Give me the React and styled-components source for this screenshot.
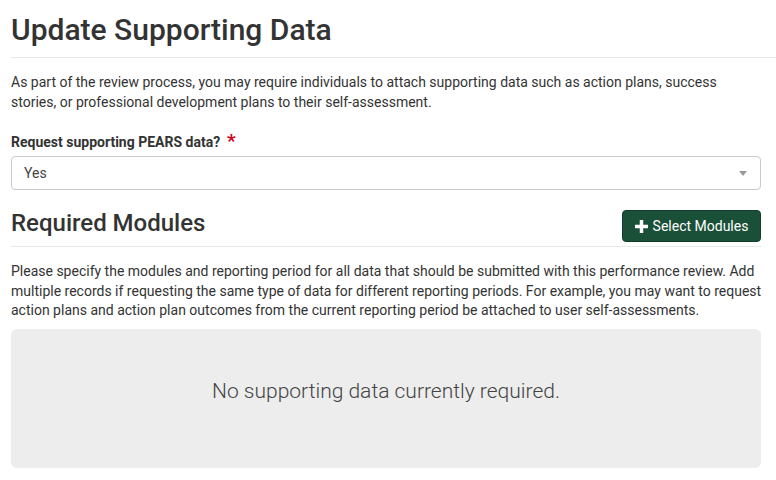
import React from "react";
import styled, { createGlobalStyle } from "styled-components";

const Global = createGlobalStyle`
  html, body { margin: 0; padding: 0; background: #fff; }
  body {
    font-family: Roboto, "Liberation Sans", Arial, sans-serif;
    color: #333;
    font-size: 14px;
  }
  * { box-sizing: border-box; }
`;

const Page = styled.div`
  width: 776px;
  padding: 0 15px 24px 11px;
`;

const TitleBar = styled.div`
  margin: 12px -15px 0 0;
  padding-bottom: 10px;
  border-bottom: 1px solid #e6e6e6;
`;

const Title = styled.h1`
  margin: 0;
  font-size: 30px;
  line-height: 35px;
  font-weight: 500;
  color: #333;
`;

const Text = styled.p`
  margin: ${(p) => p.$mt || 0}px ${(p) => p.$mr || 0}px 0 0;
  font-size: 14px;
  line-height: ${(p) => p.$lh || 20}px;
  color: #333;
`;

const Label = styled.label`
  display: block;
  margin-top: 20px;
  font-size: 14px;
  line-height: 20px;
  font-weight: 700;
  color: #333;
`;

const Star = styled.span`
  color: #d0021b;
  font-size: 19px;
  margin-left: 7px;
  line-height: 0;
`;

const Select = styled.div`
  margin-top: 4px;
  height: 34px;
  border: 1px solid #cbcbcb;
  border-radius: 4px;
  display: flex;
  align-items: center;
  justify-content: space-between;
  padding: 0 12px 0 12px;
  color: #444;
  font-size: 14px;
`;

const Caret = styled.span`
  width: 0;
  height: 0;
  border-left: 4px solid transparent;
  border-right: 4px solid transparent;
  border-top: 5px solid #999;
  margin-right: 1px;
`;

const SectionHead = styled.div`
  margin-top: 20px;
  display: flex;
  align-items: flex-end;
  justify-content: space-between;
  padding-bottom: 4px;
  border-bottom: 1px solid #e9e9e9;
`;

const SectionTitle = styled.h2`
  margin: 0 0 6px;
  font-size: 24px;
  line-height: 26px;
  font-weight: 500;
  color: #333;
`;

const Button = styled.button`
  height: 32px;
  width: 139px;
  display: flex;
  align-items: center;
  justify-content: center;
  gap: 5px;
  background: #1a5038;
  color: #fff;
  border: 1px solid #123d2a;
  border-radius: 4px;
  font-family: Roboto, "Liberation Sans", Arial, sans-serif;
  font-size: 14px;
  padding: 0 8px;
  cursor: pointer;
`;

const Empty = styled.div`
  margin-top: 8px;
  height: 139px;
  padding-bottom: 14px;
  background: #ededed;
  border-radius: 6px;
  display: flex;
  align-items: center;
  justify-content: center;
  font-size: 21px;
  font-weight: 300;
  color: #444;
`;

const PlusIcon = () => (
  <svg width="13" height="13" viewBox="0 0 12 12" aria-hidden="true">
    <path d="M4.4 0h3.2v4.4H12v3.2H7.6V12H4.4V7.6H0V4.4h4.4z" fill="#fff" />
  </svg>
);

export default function App() {
  return (
    <>
      <Global />
      <Page>
        <TitleBar>
          <Title>Update Supporting Data</Title>
        </TitleBar>
        <Text $mt={14}>
          As part of the review process, you may require individuals to attach supporting data such as
          action plans, success stories, or professional development plans to their self-assessment.
        </Text>
        <Label>
          Request supporting PEARS data?<Star>*</Star>
        </Label>
        <Select>
          <span>Yes</span>
          <Caret />
        </Select>
        <SectionHead>
          <SectionTitle>Required Modules</SectionTitle>
          <Button type="button">
            <PlusIcon />
            Select Modules
          </Button>
        </SectionHead>
        <Text $mt={15} $lh={19.5} $mr={-12}>
          Please specify the modules and reporting period for all data that should be submitted with this
          performance review. Add multiple records if requesting the same type of data for different
          reporting periods. For example, you may want to request action plans and action plan outcomes
          from the current reporting period be attached to user self-assessments.
        </Text>
        <Empty>No supporting data currently required.</Empty>
      </Page>
    </>
  );
}
